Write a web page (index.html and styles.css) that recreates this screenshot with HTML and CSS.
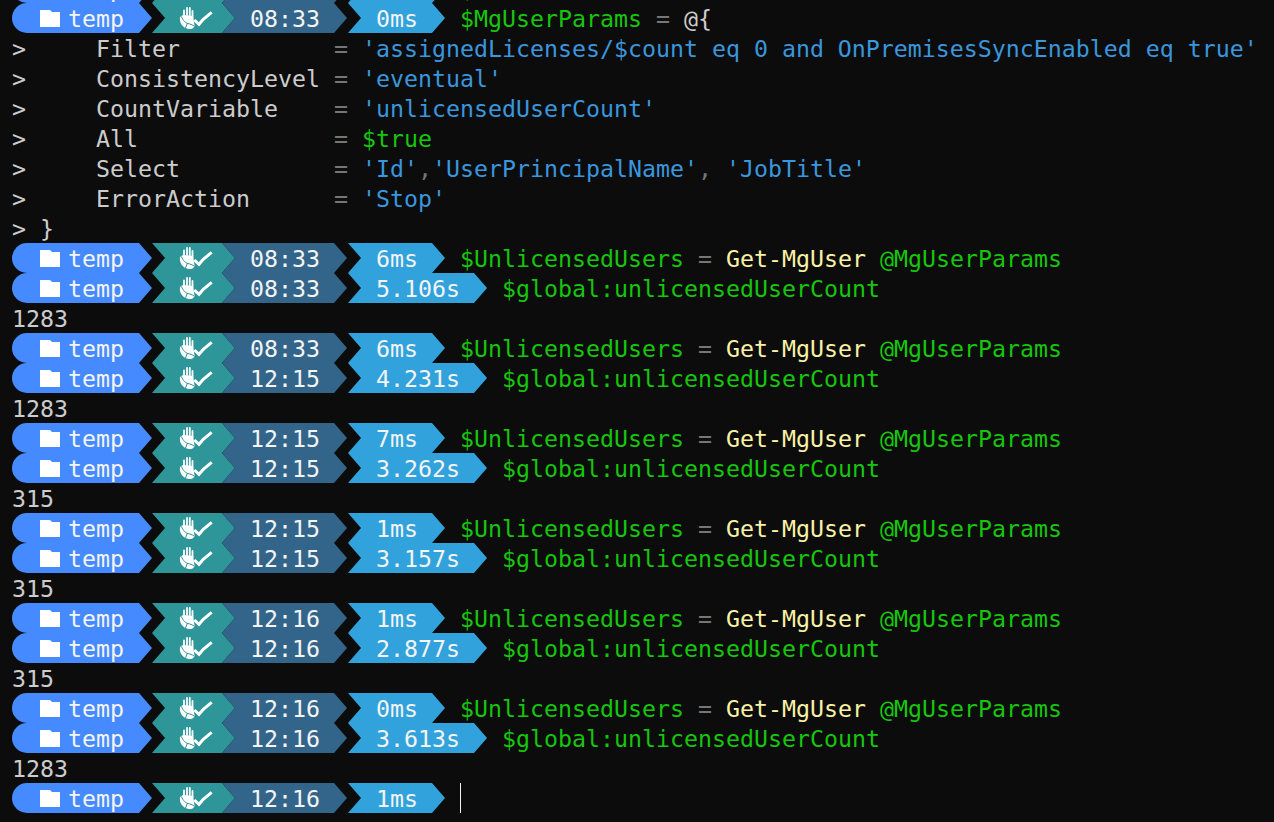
FILE: index.html
```html
<!DOCTYPE html>
<html lang="en">
<head>
<meta charset="utf-8">
<title>PowerShell</title>
<link rel="stylesheet" href="styles.css">
</head>
<body>
<svg class="defs" width="0" height="0" aria-hidden="true">
  <symbol id="folder" viewBox="0 0 20 30"><path d="M0 7h10l2 2h8v15H0z" fill="#fff"/></symbol>
  <symbol id="hand" viewBox="0 0 36 30">
    <path d="M2 14C1 20 5 25.500 11 26 15 26.300 17.300 24 16.300 21L15 13 5 12Z" fill="#fff"/>
    <g fill="none" stroke="#fff" stroke-linecap="round" stroke-width="1.800">
      <path d="M6 14V7.500M9 13V5M11.800 13V5M14.500 15V8"/>
    </g>
    <path d="M3.500 13.500C5 18 8 20 10 20.500 12 21 14 21.500 16 23M9.500 20 7.500 25" fill="none" stroke="#2e9599" stroke-width="1"/>
    <path d="M16.300 17 21 21.300 25.300 16.300 33.700 9.300" fill="none" stroke="#fff" stroke-width="3"/>
  </symbol>
</svg>
<main class="terminal">
  <div class="prompt"><span class="seg seg-path"><svg class="ico-folder"><use href="#folder"/></svg>temp</span><span class="seg seg-status"><svg class="ico-hand"><use href="#hand"/></svg></span><span class="seg seg-time">08:33</span><span class="seg seg-dur">0ms</span><span class="cmd"><span class="g">$x</span></span></div>
  <div class="prompt"><span class="seg seg-path"><svg class="ico-folder"><use href="#folder"/></svg>temp</span><span class="seg seg-status"><svg class="ico-hand"><use href="#hand"/></svg></span><span class="seg seg-time">08:33</span><span class="seg seg-dur">0ms</span><span class="cmd"><span class="g">$MgUserParams</span> <span class="o">=</span> @{</span></div>
  <div class="row">&gt;     Filter           <span class="o">=</span> <span class="s">'assignedLicenses/$count eq 0 and OnPremisesSyncEnabled eq true'</span></div>
  <div class="row">&gt;     ConsistencyLevel <span class="o">=</span> <span class="s">'eventual'</span></div>
  <div class="row">&gt;     CountVariable    <span class="o">=</span> <span class="s">'unlicensedUserCount'</span></div>
  <div class="row">&gt;     All              <span class="o">=</span> <span class="g">$true</span></div>
  <div class="row">&gt;     Select           <span class="o">=</span> <span class="s">'Id'</span><span class="o">,</span><span class="s">'UserPrincipalName'</span><span class="o">,</span> <span class="s">'JobTitle'</span></div>
  <div class="row">&gt;     ErrorAction      <span class="o">=</span> <span class="s">'Stop'</span></div>
  <div class="row">&gt; }</div>
  <div class="prompt"><span class="seg seg-path"><svg class="ico-folder"><use href="#folder"/></svg>temp</span><span class="seg seg-status"><svg class="ico-hand"><use href="#hand"/></svg></span><span class="seg seg-time">08:33</span><span class="seg seg-dur">6ms</span><span class="cmd"><span class="g">$UnlicensedUsers</span> <span class="o">=</span> <span class="y">Get-MgUser</span> <span class="g">@MgUserParams</span></span></div>
  <div class="prompt"><span class="seg seg-path"><svg class="ico-folder"><use href="#folder"/></svg>temp</span><span class="seg seg-status"><svg class="ico-hand"><use href="#hand"/></svg></span><span class="seg seg-time">08:33</span><span class="seg seg-dur">5.106s</span><span class="cmd"><span class="g">$global:unlicensedUserCount</span></span></div>
  <div class="row">1283</div>
  <div class="prompt"><span class="seg seg-path"><svg class="ico-folder"><use href="#folder"/></svg>temp</span><span class="seg seg-status"><svg class="ico-hand"><use href="#hand"/></svg></span><span class="seg seg-time">08:33</span><span class="seg seg-dur">6ms</span><span class="cmd"><span class="g">$UnlicensedUsers</span> <span class="o">=</span> <span class="y">Get-MgUser</span> <span class="g">@MgUserParams</span></span></div>
  <div class="prompt"><span class="seg seg-path"><svg class="ico-folder"><use href="#folder"/></svg>temp</span><span class="seg seg-status"><svg class="ico-hand"><use href="#hand"/></svg></span><span class="seg seg-time">12:15</span><span class="seg seg-dur">4.231s</span><span class="cmd"><span class="g">$global:unlicensedUserCount</span></span></div>
  <div class="row">1283</div>
  <div class="prompt"><span class="seg seg-path"><svg class="ico-folder"><use href="#folder"/></svg>temp</span><span class="seg seg-status"><svg class="ico-hand"><use href="#hand"/></svg></span><span class="seg seg-time">12:15</span><span class="seg seg-dur">7ms</span><span class="cmd"><span class="g">$UnlicensedUsers</span> <span class="o">=</span> <span class="y">Get-MgUser</span> <span class="g">@MgUserParams</span></span></div>
  <div class="prompt"><span class="seg seg-path"><svg class="ico-folder"><use href="#folder"/></svg>temp</span><span class="seg seg-status"><svg class="ico-hand"><use href="#hand"/></svg></span><span class="seg seg-time">12:15</span><span class="seg seg-dur">3.262s</span><span class="cmd"><span class="g">$global:unlicensedUserCount</span></span></div>
  <div class="row">315</div>
  <div class="prompt"><span class="seg seg-path"><svg class="ico-folder"><use href="#folder"/></svg>temp</span><span class="seg seg-status"><svg class="ico-hand"><use href="#hand"/></svg></span><span class="seg seg-time">12:15</span><span class="seg seg-dur">1ms</span><span class="cmd"><span class="g">$UnlicensedUsers</span> <span class="o">=</span> <span class="y">Get-MgUser</span> <span class="g">@MgUserParams</span></span></div>
  <div class="prompt"><span class="seg seg-path"><svg class="ico-folder"><use href="#folder"/></svg>temp</span><span class="seg seg-status"><svg class="ico-hand"><use href="#hand"/></svg></span><span class="seg seg-time">12:15</span><span class="seg seg-dur">3.157s</span><span class="cmd"><span class="g">$global:unlicensedUserCount</span></span></div>
  <div class="row">315</div>
  <div class="prompt"><span class="seg seg-path"><svg class="ico-folder"><use href="#folder"/></svg>temp</span><span class="seg seg-status"><svg class="ico-hand"><use href="#hand"/></svg></span><span class="seg seg-time">12:16</span><span class="seg seg-dur">1ms</span><span class="cmd"><span class="g">$UnlicensedUsers</span> <span class="o">=</span> <span class="y">Get-MgUser</span> <span class="g">@MgUserParams</span></span></div>
  <div class="prompt"><span class="seg seg-path"><svg class="ico-folder"><use href="#folder"/></svg>temp</span><span class="seg seg-status"><svg class="ico-hand"><use href="#hand"/></svg></span><span class="seg seg-time">12:16</span><span class="seg seg-dur">2.877s</span><span class="cmd"><span class="g">$global:unlicensedUserCount</span></span></div>
  <div class="row">315</div>
  <div class="prompt"><span class="seg seg-path"><svg class="ico-folder"><use href="#folder"/></svg>temp</span><span class="seg seg-status"><svg class="ico-hand"><use href="#hand"/></svg></span><span class="seg seg-time">12:16</span><span class="seg seg-dur">0ms</span><span class="cmd"><span class="g">$UnlicensedUsers</span> <span class="o">=</span> <span class="y">Get-MgUser</span> <span class="g">@MgUserParams</span></span></div>
  <div class="prompt"><span class="seg seg-path"><svg class="ico-folder"><use href="#folder"/></svg>temp</span><span class="seg seg-status"><svg class="ico-hand"><use href="#hand"/></svg></span><span class="seg seg-time">12:16</span><span class="seg seg-dur">3.613s</span><span class="cmd"><span class="g">$global:unlicensedUserCount</span></span></div>
  <div class="row">1283</div>
  <div class="prompt"><span class="seg seg-path"><svg class="ico-folder"><use href="#folder"/></svg>temp</span><span class="seg seg-status"><svg class="ico-hand"><use href="#hand"/></svg></span><span class="seg seg-time">12:16</span><span class="seg seg-dur">1ms</span><span class="cmd"><span class="cursor"></span></span></div>
</main>
</body>
</html>
```

FILE: styles.css
```css
html, body {
  margin: 0;
  height: 100%;
  background: #0c0c0c;
  overflow: hidden;
}

.defs {
  display: block;
  height: 0;
}

.terminal {
  margin-top: -27px;
  padding-left: 12px;
  color: #cccccc;
  font-family: "DejaVu Sans Mono", monospace;
  font-size: 23.25px;
  line-height: 32px;
  font-variant-ligatures: none;
}

.row {
  height: 30px;
  white-space: pre;
}

.prompt {
  display: flex;
  height: 30px;
}

.seg {
  flex: none;
  display: flex;
  height: 30px;
  padding-left: 28px;
  padding-right: 27px;
  color: #f4f4f4;
  clip-path: polygon(0 0, calc(100% - 13px) 0, 100% 50%, calc(100% - 13px) 100%, 0 100%, 13px 50%);
}

.seg-path {
  width: 140px;
  box-sizing: border-box;
  background: #458bff;
  border-radius: 15px 0 0 15px;
  clip-path: polygon(0 0, calc(100% - 13px) 0, 100% 50%, calc(100% - 13px) 100%, 0 100%);
}

.seg-status {
  width: 83px;
  box-sizing: border-box;
  padding: 0 0 0 26px;
  background: #2e9599;
}

.seg-time {
  margin-left: -13px;
  background: #33658a;
}

.seg-dur {
  margin-left: 1px;
  background: #31a2dc;
}

.cmd {
  flex: none;
  margin-left: 15px;
  white-space: pre;
  color: #cccccc;
}

.ico-folder {
  flex: none;
  width: 20px;
  height: 30px;
  margin-right: 8px;
}

.ico-hand {
  flex: none;
  width: 36px;
  height: 30px;
}

.g { color: #16c60c; }
.s { color: #3a96dd; }
.o { color: #767676; }
.y { color: #f9f1a5; }

.cursor {
  display: block;
  width: 1px;
  height: 30px;
  background: #f2f2f2;
}
```
